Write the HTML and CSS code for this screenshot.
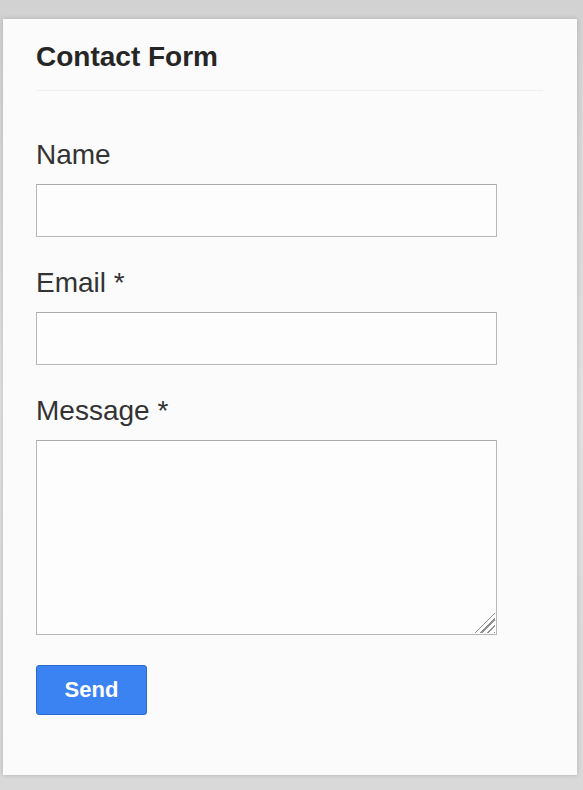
FILE: index.html
```html
<!DOCTYPE html>
<html lang="en">
<head>
    <meta charset="UTF-8">
    <meta name="viewport" content="width=device-width, initial-scale=1.0">
    <title>Contact Form</title>
    <link rel="stylesheet" href="styles.css">
</head>
<body>
    <div class="card">
        <h2 class="card-title">Contact Form</h2>

        <form class="contact-form" onsubmit="return false;">
            <label class="field-label" for="name">Name</label>
            <input class="field-input" type="text" id="name">

            <label class="field-label" for="email">Email *</label>
            <input class="field-input" type="email" id="email">

            <label class="field-label" for="message">Message *</label>
            <textarea class="field-input field-area" id="message"></textarea>

            <button class="send-btn" type="submit">Send</button>
        </form>
    </div>
</body>
</html>
```

FILE: styles.css
```css
* {
    margin: 0;
    padding: 0;
    box-sizing: border-box;
}

body {
    font-family: 'Liberation Sans', Arial, sans-serif;
    background: linear-gradient(180deg, #d2d2d2 0%, #e2e2e2 50%, #d9d9d9 100%);
    min-height: 100vh;
    padding: 19px 6px 15px 3px;
}

.card {
    background: #fbfbfb;
    height: 756px;
    padding: 24px 34px 0 33px;
    box-shadow: 0 0 5px rgba(0, 0, 0, 0.18);
}

.card-title {
    font-size: 28px;
    line-height: 1;
    font-weight: bold;
    color: #262626;
    padding-bottom: 19px;
    border-bottom: 1px solid #efefef;
    margin-bottom: 50px;
}

.contact-form {
    display: flex;
    flex-direction: column;
    align-items: flex-start;
}

.field-label {
    font-size: 28px;
    line-height: 1;
    color: #333;
    margin-bottom: 15px;
}

.field-input {
    width: 461px;
    height: 53px;
    border: 1px solid #b7b7b7;
    border-top-color: #a9a9a9;
    background: #fdfdfd;
    margin-bottom: 32px;
    font-family: inherit;
    font-size: 20px;
    padding: 6px 8px;
    outline: none;
}

/* fake resize grip, three diagonal lines like the original */
.field-area {
    height: 195px;
    margin-bottom: 30px;
    resize: none;
    background:
        linear-gradient(135deg, #fdfdfd 50%, transparent 50%) right 1px bottom 1px / 20px 20px no-repeat,
        repeating-linear-gradient(135deg, transparent 0 3px, #8f8f8f 3px 4.8px) right 1px bottom 1px / 20px 20px no-repeat,
        #fdfdfd;
}

.send-btn {
    width: 111px;
    height: 50px;
    background: #3b82f2;
    border: 1px solid #2c69cf;
    border-radius: 3px;
    color: white;
    font-family: inherit;
    font-size: 22px;
    font-weight: bold;
    cursor: pointer;
}

.send-btn:hover {
    background: #3576e0;
}
```
